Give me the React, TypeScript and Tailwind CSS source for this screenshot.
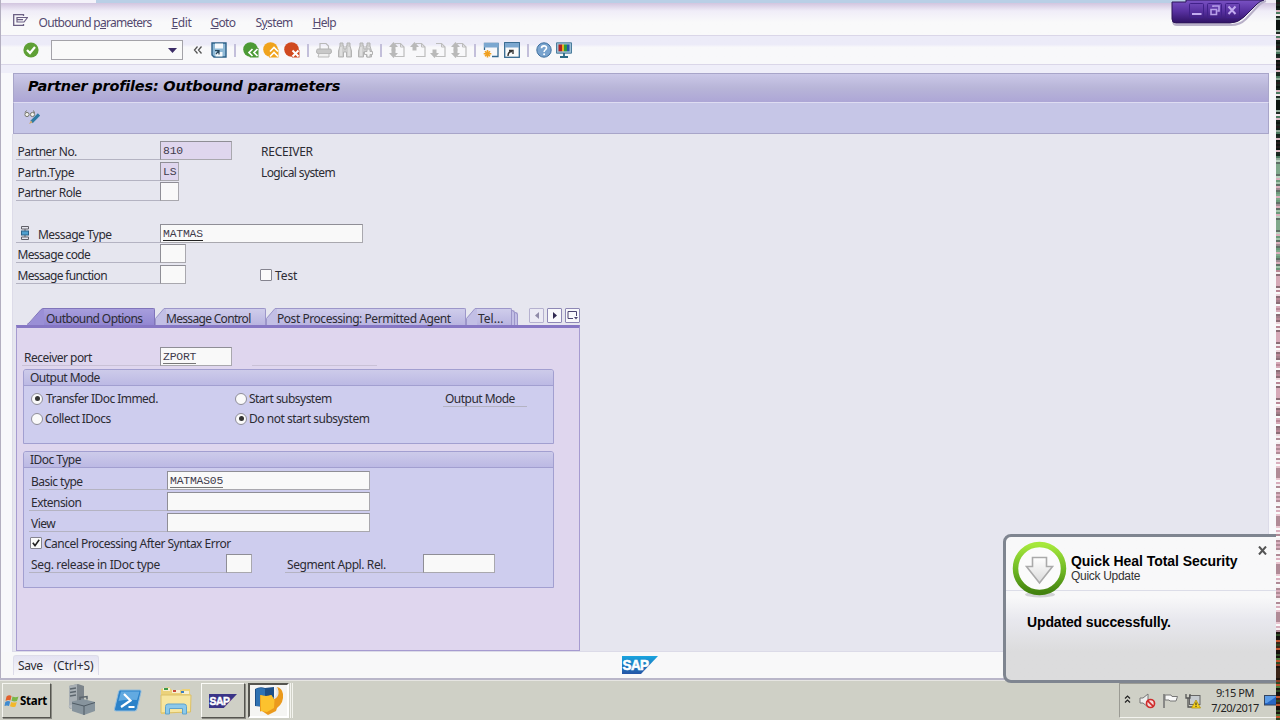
import type { ReactNode } from "react";
import clsx from "clsx";

/* ------------------------------------------------------------------ */
/*  Small building blocks                                              */
/* ------------------------------------------------------------------ */
function Label({ children, className }: { children: ReactNode; className?: string }) {
    return (
        <div className={clsx("h-[18px] shrink-0 whitespace-nowrap border-b border-[#b4b3c2] leading-[19px]", className)}>
            {children}
        </div>
    );
}

function Field({ value, className }: { value?: string; className?: string }) {
    return (
        <div
            className={clsx(
                "h-[19px] shrink-0 border border-[#a9a8ae] border-t-[#8f8e96] border-l-[#8f8e96] pl-[2px] pt-[3px] font-['Liberation_Mono'] text-[11.4px] leading-[13px] tracking-[-0.2px] text-[#3f3b4c]",
                className,
            )}
        >
            {value && <span className="block h-[13px] w-fit">{value}</span>}
        </div>
    );
}

function Row({ children }: { children?: ReactNode }) {
    return <div className="flex h-[20.65px] items-end">{children}</div>;
}

function Radio({ checked, children, className }: { checked?: boolean; children: ReactNode; className?: string }) {
    return (
        <div className={clsx("flex items-center whitespace-nowrap", className)}>
            <span className="mr-[3px] flex size-[12px] items-center justify-center rounded-full border border-[#8e8d98] bg-[#fafafa]">
                {checked && <span className="size-[5px] rounded-full bg-[#333]" />}
            </span>
            <span>{children}</span>
        </div>
    );
}

function Checkbox({ checked }: { checked?: boolean }) {
    return (
        <span className="flex size-[12px] items-center justify-center rounded-[1px] border border-[#85848f] bg-[#fafafa]">
            {checked && (
                <svg width="8" height="8" viewBox="0 0 8 8">
                    <path d="M0.8 3.8 3 6.6 7.2 0.8" fill="none" stroke="#222" strokeWidth="1.6" />
                </svg>
            )}
        </span>
    );
}

function Group({ title, children, className }: { title: string; children: ReactNode; className?: string }) {
    return (
        <div className={clsx("ml-[6px] w-[531px] rounded-t-[3px] border border-[#a29fd0] bg-[#cecdee]", className)}>
            <div className="h-[16px] rounded-t-[2px] border-b border-[#a29fd0] bg-linear-to-b from-[#cdcbea] to-[#bcb9e4] pl-[6px] leading-[15px]">
                {title}
            </div>
            {children}
        </div>
    );
}

/* ------------------------------------------------------------------ */
/*  Toolbar icons                                                      */
/* ------------------------------------------------------------------ */
function Icon({ children }: { children: ReactNode }) {
    return (
        <svg width="16" height="16" viewBox="0 0 16 16" fill="none" className="shrink-0">
            {children}
        </svg>
    );
}

const Sep = () => (
    <div className="flex w-[16px] shrink-0 justify-center">
        <div className="h-[13px] w-[2px] bg-[#c3bfda]" />
    </div>
);

function Printer() {
    return (
        <Icon>
            <path d="M4 7V1.5h6L12.5 4v3" stroke="#b9b9b9" strokeWidth="1.2" />
            <rect x="0.6" y="7" width="14.8" height="4.5" rx="1.5" fill="#c8c8c8" stroke="#b2b2b2" />
            <path d="M3 11.5h10V15H2z" fill="#f0f0f0" stroke="#b9b9b9" />
        </Icon>
    );
}

function Binoculars({ plus }: { plus?: boolean }) {
    return (
        <Icon>
            <path d="M3 1h3v3h1v3h2V4h1V1h3v3l1.5 5v6H9.5v-5h-3v5h-5V9L3 4z" fill="#cfcfcf" stroke="#b3b3b3" />
            <path d="M4 5v9M12 5v9" stroke="#efefef" />
            {plus && <path d="M10 7h3v2.5h2.5v3H13V15h-3v-2.5H7.5v-3H10z" fill="#f4f4f4" stroke="#b3b3b3" />}
        </Icon>
    );
}

function PageNav({ up, down }: { up?: boolean; down?: boolean }) {
    return (
        <Icon>
            <path d="M6 1.5h5.5L15 5v9.5H6" stroke="#bdbdbd" strokeWidth="1.2" />
            <path d="M11.5 1.5V5H15" stroke="#bdbdbd" />
            {up && <path d="M4.5 0 9 5H6.5v3.5h-4V5H0z" fill="#b9b9b9" />}
            {down && <path d="M4.5 16 9 11H6.5V7.5h-4V11H0z" fill="#b9b9b9" />}
        </Icon>
    );
}

function Toolbar() {
    return (
        <div className="flex h-[29px] shrink-0 items-center border-b border-[#dad6e8] bg-linear-to-b from-[#ecebf8] from-30% to-[#f8f8fa] to-40% pl-[22px]">
            <Icon>
                <circle cx="8" cy="8" r="7.6" fill="#5fa036" />
                <path d="M4 8l3 3 5-6" stroke="#fff" strokeWidth="2.2" />
            </Icon>
            <div className="ml-[12px] flex h-[20px] w-[132px] items-center justify-end border border-[#a3a2a8] bg-[#f9f9f9] pr-[5px]">
                <svg width="9" height="5" viewBox="0 0 9 5">
                    <path d="M0 0h9L4.5 5z" fill="#3b2c66" />
                </svg>
            </div>
            <div className="ml-[7px] flex items-center gap-[4.65px]">
                <Icon>
                    <path d="M7.5 4.5 4.5 8l3 3.5M11.5 4.5 8.5 8l3 3.5" stroke="#555" strokeWidth="1.3" />
                </Icon>
                <Icon>
                    <path d="M1 1h14v14H3l-2-2z" fill="#8fb9d6" stroke="#2c6088" strokeWidth="1.4" />
                    <path d="M4 1.5h8v5H4zM4.5 10h7v4.5h-7z" fill="#f5f9fc" />
                    <path d="M4 8.5h4v4M8 8.5 5 12" stroke="#28465c" strokeWidth="1.2" />
                </Icon>
            </div>
            <Sep />
            <div className="flex gap-[4.65px]">
                <Icon>
                    <circle cx="7.5" cy="7.5" r="7.3" fill="#4c9a35" />
                    <path d="M15.5 6v9.5H7L4.5 11 9 6z" fill="#4c9a35" />
                    <path d="M9.5 7 6 10.5 9.5 14M14.5 7 11 10.5l3.5 3.5" stroke="#fff" strokeWidth="1.7" />
                </Icon>
                <Icon>
                    <circle cx="7.5" cy="7.5" r="7.3" fill="#f0a31c" />
                    <path d="M7 5l8.5 2v8.5H6z" fill="#f0a31c" />
                    <path d="M7 9.5 11 5.5l4 4M7 14.5l4-4 4 4" stroke="#fff" strokeWidth="1.7" />
                </Icon>
                <Icon>
                    <circle cx="7.5" cy="7.5" r="7.3" fill="#d0491f" />
                    <path d="M8 8h7.5v7.5H8z" fill="#d0491f" />
                    <path d="M8.5 8.5l6 6M14.5 8.5l-6 6" stroke="#fff" strokeWidth="2" />
                </Icon>
            </div>
            <Sep />
            <div className="flex gap-[4.65px]">
                <Printer />
                <Binoculars />
                <Binoculars plus />
            </div>
            <Sep />
            <div className="flex gap-[4.65px]">
                <PageNav up down />
                <PageNav up />
                <PageNav down />
                <PageNav up down />
            </div>
            <Sep />
            <div className="flex gap-[4.65px]">
                <Icon>
                    <path d="M1.5 8V1.5h13.5v13H9" stroke="#33678f" strokeWidth="1.3" />
                    <path d="M1 1h14.5v4.5H1z" fill="#7ba7d0" />
                    <path d="M4.5 8v7.5M0.7 11.7h7.6M2 9.2l5 5M7 9.2l-5 5" stroke="#f0a020" strokeWidth="1.6" />
                </Icon>
                <Icon>
                    <rect x="0.7" y="0.7" width="14.6" height="14.6" fill="#fafafa" stroke="#33678f" strokeWidth="1.3" />
                    <path d="M1 1h14v4.5H1z" fill="#7ba7d0" />
                    <path d="M4 14c0-3 1-4.5 4-4.5M5 8.5h4V12" stroke="#333" strokeWidth="1.4" />
                </Icon>
            </div>
            <Sep />
            <div className="flex gap-[4.65px]">
                <Icon>
                    <circle cx="8" cy="8" r="7.2" fill="#79a3ce" stroke="#3d6f9f" />
                    <path d="M5.5 6.2C5.5 3 10.7 3.2 10.5 6c0 1.7-2.4 1.9-2.4 4" stroke="#fff" strokeWidth="1.6" />
                    <circle cx="8.1" cy="12.2" r="1" fill="#fff" />
                </Icon>
                <Icon>
                    <path d="M0.5 0.8h15v10.4H0.5z" fill="#9fc0d6" stroke="#4a7c9c" />
                    <path d="M2.5 2.5H6v6.8H2.5z" fill="#b32121" />
                    <path d="M6 2.5h2v6.8H6z" fill="#e8b021" />
                    <path d="M8 2.5h3v6.8H8z" fill="#2d9b3c" />
                    <path d="M11 2.5h2.5v6.8H11z" fill="#2457a8" />
                    <path d="M8 11v4M4 15h8" stroke="#2b6a86" strokeWidth="1.8" />
                </Icon>
            </div>
        </div>
    );
}

/* ------------------------------------------------------------------ */
/*  Tab strip                                                          */
/* ------------------------------------------------------------------ */
function Tab({ title, className }: { title: string; className: string }) {
    return (
        <div className={clsx("flex h-[17px]", className)}>
            <svg width="11" height="17" viewBox="0 0 11 17" className="shrink-0">
                <path d="M0 17V10.5L9 .5H11V17z" fill="#c2bfe5" />
                <path d="M0.5 17V10.5L9 .5H11" fill="none" stroke="#9c96c9" />
            </svg>
            <div className="flex-1 whitespace-nowrap rounded-tr-[2px] border-t border-r border-[#9c96c9] bg-linear-to-b from-[#cfcdeb] to-[#b9b5e0] leading-[19px]">
                {title}
            </div>
        </div>
    );
}

function TabStrip() {
    return (
        <div className="mt-[24px] ml-[3px] flex h-[17px] w-[564px]">
            <svg width="17" height="17" viewBox="0 0 17 17" className="ml-[11px] shrink-0">
                <path d="M0 17 2 15.5 14 1.5 16 .5H17V17z" fill="#9a8fd6" />
                <path d="M0 16.5 2 15 14 1.5 16 .5H17" fill="none" stroke="#8075ba" />
            </svg>
            <div className="w-[111px] whitespace-nowrap rounded-tr-[2px] border-t border-r border-[#8075ba] bg-linear-to-b from-[#a79edd] to-[#9287d1] pl-[2px] leading-[19px] tracking-[-0.58px]">
                Outbound Options
            </div>
            <Tab title="Message Control" className="w-[111px] tracking-[-0.68px]" />
            <Tab title="Post Processing: Permitted Agent" className="w-[200px] tracking-[-0.45px]" />
            <Tab title="Tel..." className="w-[46px] tracking-[0px] [&>div]:pl-px" />
            <div className="mt-[2px] w-[3px] rounded-tr border-t border-r border-[#9c96c9] bg-[#c2bfe5]" />
            <div className="mt-[4px] w-[3px] rounded-tr border-t border-r border-[#9c96c9] bg-[#c2bfe5]" />
            <div className="ml-auto flex gap-[3px]">
                <div className="flex size-[15px] items-center justify-center rounded-[1px] border border-[#b5b1cf] bg-[#ebeaf4]">
                    <svg width="4" height="7" viewBox="0 0 4 7"><path d="M4 0v7L0 3.5z" fill="#8f8aa8" /></svg>
                </div>
                <div className="flex size-[15px] items-center justify-center rounded-[1px] border border-[#8e88b5] bg-[#f8f8fb]">
                    <svg width="4" height="7" viewBox="0 0 4 7"><path d="M0 0v7l4-3.5z" fill="#2f2850" /></svg>
                </div>
                <div className="flex size-[15px] items-center justify-center rounded-[1px] border border-[#8e88b5] bg-[#f8f8fb]">
                    <svg width="11" height="10" viewBox="0 0 11 10" fill="none">
                        <path d="M6 8.5H1V1.500h8.500V6" stroke="#4a4370" />
                        <path d="M7 7h4L9 9.500z" fill="#4a4370" />
                    </svg>
                </div>
            </div>
        </div>
    );
}

/* ------------------------------------------------------------------ */
/*  Desktop parts                                                      */
/* ------------------------------------------------------------------ */
function SapLogo({ dark, width, height }: { dark?: boolean; width: number; height: number }) {
    return (
        <svg width={width} height={height} viewBox="0 0 36 18" preserveAspectRatio="none">
            <defs>
                <linearGradient id="sapBlue" x1="0" y1="0" x2="0" y2="1">
                    <stop offset="0" stopColor="#19a5df" />
                    <stop offset="1" stopColor="#2455a6" />
                </linearGradient>
            </defs>
            <path d="M0 0h36L19 18H0z" fill={dark ? "#3a3487" : "url(#sapBlue)"} />
            <text x="0.5" y="14" fontFamily="Liberation Sans" fontWeight="700" fontSize="14" textLength="26" lengthAdjust="spacingAndGlyphs" fill="#fff" stroke="#fff" strokeWidth="0.6">
                SAP
            </text>
        </svg>
    );
}

function WindowButtons() {
    return (
        <svg width="96" height="26" viewBox="0 0 96 26" fill="none" className="absolute top-0 left-[1171px]">
            <defs>
                <linearGradient id="capsule" x1="0" y1="0" x2="0" y2="1">
                    <stop offset="0" stopColor="#7a52c4" />
                    <stop offset="0.5" stopColor="#57309f" />
                    <stop offset="1" stopColor="#2f1263" />
                </linearGradient>
            </defs>
            <path d="M2 3v18q0 4 4 4h54q9 0 15-6L88 5q3-3 7-4" stroke="#b8b0c8" strokeWidth="2" />
            <path d="M1 2h14V0h78q-4 1-7 4L73 17q-6 6-14 6H5q-4 0-4-4z" fill="url(#capsule)" stroke="#2c1458" />
            <rect x="18.5" y="3.5" width="14" height="14" rx="1" stroke="#41218a" />
            <rect x="36.5" y="3.5" width="14" height="14" rx="1" stroke="#41218a" />
            <rect x="54.5" y="3.5" width="14" height="14" rx="1" stroke="#41218a" />
            <path d="M21 14h9.5" stroke="#c3acf0" strokeWidth="2" />
            <path d="M42 7V6h6v5h-1.5M40 9.5h5.5v5H40z" stroke="#b79fe8" strokeWidth="1.6" />
            <path d="M57.5 6.5l7 7.5M64.5 6.5l-7 7.5" stroke="#c3acf0" strokeWidth="2" />
        </svg>
    );
}

function Notification() {
    return (
        <div className="absolute top-[534px] left-[1003px] flex h-[149px] w-[290px] flex-col overflow-hidden rounded-[8px] border-[3px] border-[#7f8590] bg-linear-to-b from-[#f8f8f9] from-42% via-[#e8e8ee] via-58% to-[#dcdcdd] to-80%">
            <div className="flex h-[54px] shrink-0 border-b border-[#dcdde8]">
                <svg width="56" height="60" viewBox="0 0 56 60" className="relative ml-[6px] mt-[4px] shrink-0">
                    <defs>
                        <linearGradient id="ring" x1="0" y1="0" x2="0" y2="1">
                            <stop offset="0" stopColor="#a6e83c" />
                            <stop offset="0.5" stopColor="#72bb25" />
                            <stop offset="1" stopColor="#43820f" />
                        </linearGradient>
                        <linearGradient id="arrow" x1="0" y1="0" x2="0" y2="1">
                            <stop offset="0" stopColor="#fff" />
                            <stop offset="1" stopColor="#dadada" />
                        </linearGradient>
                    </defs>
                    <ellipse cx="28" cy="53.5" rx="15" ry="3" fill="#d2d2d6" />
                    <circle cx="27.5" cy="27.5" r="24" fill="#fbfbfb" stroke="url(#ring)" strokeWidth="5.5" />
                    <path d="M20.5 16.5h14v9h6L27.5 42 14.5 25.5h6z" fill="url(#arrow)" stroke="#aaa" strokeWidth="1.6" />
                </svg>
                <div className="ml-[3px] mt-[16px] font-['Liberation_Sans'] whitespace-nowrap text-black">
                    <div className="text-[14px] leading-[17px] font-bold tracking-[-0.05px]">Quick Heal Total Security</div>
                    <div className="text-[12px] leading-[13px] tracking-[-0.3px] text-[#333]">Quick Update</div>
                </div>
                <svg width="9" height="9" viewBox="0 0 9 9" className="ml-[20px] mt-[9px] shrink-0">
                    <path d="M1 .5l7 8M8 .5l-7 8" stroke="#555" strokeWidth="2" />
                </svg>
            </div>
            <div className="mt-[22px] ml-[21px] font-['Liberation_Sans'] text-[14px] leading-[18px] font-bold tracking-[-0.14px] text-black">
                Updated successfully.
            </div>
        </div>
    );
}

function Taskbar() {
    return (
        <div className="flex h-[39px] shrink-0 bg-[#cfd0c6] pt-px">
            <div className="ml-[2px] mt-[1px] flex h-[35px] w-[49px] items-center border border-[#f5f5f0] border-r-[#55554f] border-b-[#55554f] pl-px shadow-[1px_1px_0_#8b8b84]">
                <svg width="15" height="14" viewBox="-1 0 15 14" className="shrink-0">
                    <path d="M1.5 2.5Q4 .5 6.5 2L5.5 6.5Q3 5.5.5 7z" fill="#e2602c" />
                    <path d="M7.5 2.5q3 1.5 6 0L12 7Q9.5 8 6.5 6.8z" fill="#7ab648" />
                    <path d="M.3 8Q2.5 6.5 5.2 7.5L4 12Q2 10.8-.5 12z" fill="#3f8bd0" />
                    <path d="M6.2 8q3 1.2 5.6 0l-1.3 4.5q-2.8 1.2-5.5-.2z" fill="#f3b829" />
                </svg>
                <span className="ml-px text-[11.5px] font-bold tracking-[-0.25px] text-black">Start</span>
            </div>
            {/* server manager */}
            <svg width="28" height="32" viewBox="0 0 28 32" className="ml-[17px] mt-[2px] shrink-0">
                <path d="M1 2 10 0l6 2v22l-9 2-6-2z" fill="#7d858b" />
                <path d="M1 2l8-2v22l-8 2z" fill="#a8afb4" />
                <path d="M2 5l6-1M2 8.5l6-1M2 12l6-1" stroke="#5d666d" strokeWidth="1.3" />
                <path d="M0 22l9-3 6 4-9 4z" fill="#b9bec2" />
                <path d="M4 17.5 15 15l12 3v9l-11 4-12-4z" fill="#87949d" />
                <path d="M4 19l12 3 11-3.5M16 22v9" stroke="#4f5b64" fill="none" />
                <path d="M12 16v-2.5l7-1v3" fill="none" stroke="#5d666d" strokeWidth="1.5" />
            </svg>
            {/* powershell */}
            <svg width="28" height="24" viewBox="0 0 28 24" className="ml-[18px] mt-[7px] shrink-0">
                <path d="M6 1h20q1.5 0 1 2l-4 17q-.5 2-2.5 2H2q-2 0-1.5-2l4-17Q5 1 6 1z" fill="#2b82c9" stroke="#93bddd" />
                <path d="M7 2.5h18.5L23 11Q13 10 4.5 12z" fill="#62aae1" />
                <path d="M10 5l6.5 6.5L7 18M14.5 18h6" fill="none" stroke="#fff" strokeWidth="2.2" />
            </svg>
            {/* explorer */}
            <svg width="32" height="30" viewBox="0 0 32 30" className="ml-[18px] mt-[4px] shrink-0">
                <path d="M1 7V3l8-2 3 3h9l2-1h7v5l1 18-30 2z" fill="#ecd27a" />
                <path d="M3 2h7v3H3zM12 4h8v3h-8zM22 5h7v3h-7z" fill="#f7efd0" />
                <path d="M4 2h4v2H4z" fill="#3f9a4a" />
                <path d="M13 4h3v2h-3z" fill="#c84a3b" />
                <path d="M21 5h3v2h-3z" fill="#3d7fc2" />
                <path d="M1 9h30l-.5 17L1 27z" fill="#f7e6a0" stroke="#dcc067" />
                <path d="M5.5 28V20.5q0-2.5 2.5-2.5h16q2.5 0 2.5 2.5V28h-4v-5.5h-13V28z" fill="#8cc9ea" stroke="#5fa3cc" />
            </svg>
            <div className="ml-[9px] mt-[1px] flex h-[35px] w-[44px] items-center justify-center border border-[#fbfbf7] border-r-[#55554f] border-b-[#55554f] shadow-[1px_1px_0_#8b8b84]">
                <SapLogo dark width={28} height={14} />
            </div>
            <div className="ml-[3px] mt-[1px] flex h-[35px] w-[41px] items-center justify-center border-2 border-[#fff] border-t-[#55554f] border-l-[#55554f] bg-[#f5f5f3]">
                <svg width="32" height="30" viewBox="0 0 32 30">
                    <path d="M2 3q5-3 10-1l9-1v18l-10 2-9-1z" fill="#1d4f87" />
                    <path d="M3 3q5-2 9 0v17H3z" fill="#2f72b2" />
                    <path d="M24 1q5 1 6 7 1 9-6 14l-1 3-8 4-6-4-2 .5V9q6 2 11 0l2 4q5-2 5-6Q25.500 3.500 24 1z" fill="#eb9a1c" />
                    <path d="M7.500 9q6 2 11 0l3 5-.5 8-7 4-6-1z" fill="#fcc22e" />
                    <path d="M23 1.500q4 7-2 11" fill="none" stroke="#dfe4ea" strokeWidth="2" />
                </svg>
            </div>
            <div className="ml-px mt-[1px] h-[35px] w-[3px] border-x border-[#f3f3ee]" />

            {/* notification area */}
            <div className="ml-auto mt-px flex h-[35px] w-[161px] items-center border-t border-b border-l border-[#9b9b94] border-b-[#f3f3ee] pl-[4px]">
                <svg width="7" height="8" viewBox="0 0 7 8" className="mb-[3px]">
                    <path d="M1 3.5 3.5 1 6 3.5M1 7.5 3.5 5 6 7.5" fill="none" stroke="#222" strokeWidth="1.2" />
                </svg>
                <svg width="17" height="16" viewBox="0 0 17 16" className="ml-[8px]">
                    <path d="M1 5h3l5-4v13l-5-4H1z" fill="#eee" stroke="#777" />
                    <circle cx="11.5" cy="10.5" r="4" fill="#f4dada" stroke="#cf2c2c" strokeWidth="1.7" />
                    <path d="M8.8 7.8l5.5 5.5" stroke="#cf2c2c" strokeWidth="1.7" />
                </svg>
                <svg width="17" height="16" viewBox="0 0 17 16" className="ml-[6px]">
                    <path d="M2 1v14" stroke="#777" strokeWidth="1.6" />
                    <path d="M3 2h6l1 1.5h5.5L14 8H8L7 7H3z" fill="#f8f8f8" stroke="#777" />
                </svg>
                <svg width="16" height="16" viewBox="0 0 16 16" className="ml-[6px]">
                    <rect x="4.5" y="2.5" width="10.5" height="9" fill="#c6cbd0" stroke="#666" />
                    <path d="M1 1v4h4V1M3 5v9h4" fill="none" stroke="#555" strokeWidth="1.3" />
                    <path d="M11 7l4.5 8h-9z" fill="#f7d11e" stroke="#a98b00" strokeWidth="0.7" />
                    <path d="M11 9.5v2.8M11 13v1" stroke="#222" />
                </svg>
                <div className="mb-[2px] ml-[10px] w-[48px] text-center text-[11px] leading-[15px] tracking-[-0.5px] whitespace-nowrap text-[#222]">
                    <div>9:15 PM</div>
                    <div>7/20/2017</div>
                </div>
                <svg width="14" height="12" viewBox="0 0 14 12" className="ml-[5px]">
                    <rect x="0.5" y="0.5" width="13" height="9.5" fill="#2766c4" stroke="#35455f" />
                    <path d="M1 1h12L3 8H1z" fill="#5b9be6" />
                </svg>
            </div>
        </div>
    );
}

/* garbled scanlines along the right edge of the capture */
const STRIP_TOP = ["#12211a", "#3d6a52", "#0d1411", "#8fa898", "#1b2a22", "#f3e6ea", "#4b7a60", "#241a1c", "#d9b7c2", "#5f8a72"];
const STRIP_GREEN = ["#7fa88b", "#5f6f66", "#b9d2bf", "#d9aebb", "#6b9a7b", "#9e8c93", "#a3c4ab"];
const STRIP_PINK = ["#d6a9b8", "#8b6c76", "#f5eef0", "#b98796", "#fafafa", "#a4808c", "#ecd2da"];
const STRIP_PALE = ["#fafafa", "#d9aebd", "#f6eff2", "#fafafa", "#b08a96", "#e9c5d0"];
const STRIP_END = ["#3b2418", "#1b120d", "#8a3a22", "#2f4a24", "#c0552f", "#14100d", "#4f7a3d"];

function stripColor(i: number) {
    const y = i * 2;
    const set = y < 160 ? STRIP_TOP : y < 270 ? STRIP_GREEN : y < 435 ? STRIP_PINK : y < 632 ? STRIP_PALE : STRIP_END;
    return set[(i * 7 + ((i * i) >> 3)) % set.length];
}

function EdgeStrip() {
    return (
        <div className="absolute top-0 right-0 w-[4px]">
            {Array.from({ length: 360 }, (_, i) => (
                <div key={i} className="h-[2px]" style={{ background: stripColor(i) }} />
            ))}
        </div>
    );
}

/* ------------------------------------------------------------------ */
/*  Screen                                                             */
/* ------------------------------------------------------------------ */
export default function App() {
    return (
        <div className="relative flex h-[720px] w-[1280px] flex-col overflow-hidden bg-[#f8f8fa] font-['Noto_Sans',sans-serif] text-[12px] tracking-[-0.53px] text-[#2c2b33]">
            <div className="flex h-[678px] shrink-0 flex-col border-l border-[#b3afc0]">
                <div className="flex h-[3px] shrink-0">
                    <div className="w-[95px] bg-[#f4f2fa]" />
                    <div className="flex-1 bg-[#b9cfe6]" />
                    <div className="w-[16px] bg-[#f0edf6]" />
                </div>

                {/* ========== MENU BAR ========== */}
                <div className="flex h-[33px] shrink-0 items-center border-b border-[#dad6e8] bg-linear-to-b from-[#d2c5df] via-[#f0edf8] via-25% to-[#f9f9fa] to-60% pl-[12px] pt-[7px] tracking-[-0.7px] whitespace-nowrap text-[#54496f]">
                    <svg width="15" height="12" viewBox="0 0 15 12" fill="none" className="mb-[6px]">
                        <path d="M10.5 2V.7H.7v10.6h9.8V10" stroke="#6b5f84" strokeWidth="1.3" />
                        <path d="M4 3.5h10.5L11 8H4zM4 5.7h6" stroke="#6b5f84" strokeWidth="1.2" />
                    </svg>
                    <span className="ml-[10.5px] w-[133px]">Outbound p<u>a</u>rameters</span>
                    <span className="w-[39px] tracking-[-0.4px]"><u>E</u>dit</span>
                    <span className="w-[45px]"><u>G</u>oto</span>
                    <span className="w-[57px] tracking-[-0.6px]">S<u>y</u>stem</span>
                    <span><u>H</u>elp</span>
                </div>

                <Toolbar />

                {/* ========== WORK AREA ========== */}
                <div className="h-[8px] shrink-0 bg-[#efeef9]" />
                <div className="flex flex-1 flex-col bg-[#f8f8fb] pr-[11px] pl-[11px]">
                    <div className="ml-px flex h-[30px] shrink-0 items-center border border-[#a8a5c9] border-b-[#dedcf2] bg-linear-to-b from-[#cbc8e8] via-[#b8b5d8] via-50% to-[#ada6d6] pb-[3px] pl-[14px] font-['DejaVu_Sans'] text-[14.5px] font-bold text-black italic">
                        <span className="tracking-[-0.2px] whitespace-nowrap">Partner profiles: Outbound parameters</span>
                    </div>
                    <div className="ml-px h-[31px] shrink-0 border-x border-b border-[#a8a5c9] bg-[#c6c6e7] pt-[6px] pl-[10px]">
                        <svg width="16" height="16" viewBox="0 0 16 16" fill="none">
                            <circle cx="3" cy="5.5" r="2.1" fill="#f2f2ee" stroke="#77776c" />
                            <circle cx="8.5" cy="5.5" r="2.1" fill="#f2f2ee" stroke="#77776c" />
                            <path d="M1 3.5 2.5 1.5M10.5 4 9.5 1.5" stroke="#77776c" />
                            <path d="M15 5.5 7.5 13" stroke="#2f7ba3" strokeWidth="3.2" />
                            <path d="M7 11.5 5 15l3.5-1.5z" fill="#cfa56a" />
                        </svg>
                    </div>

                    <div className="flex-1 border-x border-b border-[#dcdbe8] bg-[#e6e6ef] pt-[5.3px]">
                        <Row>
                            <Label className="ml-[3px] w-[144px] pl-[1.5px]">Partner No.</Label>
                            <Field value="810" className="w-[72px] bg-[#dfd6ee]" />
                            <span className="ml-[29px] leading-[17px] tracking-[-0.25px]">RECEIVER</span>
                        </Row>
                        <Row>
                            <Label className="ml-[3px] w-[144px] pl-[1.5px] tracking-[-0.3px]">Partn.Type</Label>
                            <Field value="LS" className="w-[19px] bg-[#dfd6ee]" />
                            <span className="ml-[82px] leading-[17px] tracking-[-0.62px]">Logical system</span>
                        </Row>
                        <Row>
                            <Label className="ml-[3px] w-[144px] pl-[1.5px]">Partner Role</Label>
                            <Field className="w-[19px] bg-[#f9f9f9]" />
                        </Row>
                        <Row />
                        <Row>
                            <Label className="ml-[3px] flex w-[144px] pl-[5px]">
                                <svg width="8" height="14" viewBox="0 0 8 14" fill="none" className="mt-px mr-[9px]">
                                    <path d="M.5 .5h7v2.5h-7zM.5 11h7v2.5h-7zM4 3v8" stroke="#606068" />
                                    <rect x="0.5" y="5" width="7" height="4" fill="#4fa0cf" stroke="#2d6288" />
                                </svg>
                                Message Type
                            </Label>
                            <Field value="MATMAS" className="w-[203px] bg-[#f9f9f9] [&>span]:border-b [&>span]:border-[#222]" />
                        </Row>
                        <Row>
                            <Label className="ml-[3px] w-[144px] pl-[1.5px] tracking-[-0.64px]">Message code</Label>
                            <Field className="w-[26px] bg-[#f9f9f9]" />
                        </Row>
                        <Row>
                            <Label className="ml-[3px] w-[144px] pl-[1.5px] tracking-[-0.66px]">Message function</Label>
                            <Field className="w-[26px] bg-[#f9f9f9]" />
                            <div className="ml-[74px] flex h-[18px] items-center gap-[3px] leading-[17px] tracking-[-0.1px]">
                                <Checkbox />
                                <span className="pt-px">Test</span>
                            </div>
                        </Row>

                        <TabStrip />
                        <div className="ml-[3px] h-[326px] w-[564px] border border-t-[3px] border-[#a69bd0] border-t-[#8677c4] bg-[#dfd6ee]">
                            <div className="flex h-[38px] items-end">
                                <Label className="ml-[5px] w-[138px] border-[#c9c1d6] pl-[2px]">Receiver port</Label>
                                <Field value="ZPORT" className="w-[72px] bg-[#f9f9f9] [&>span]:border-b [&>span]:border-[#777]" />
                                <div className="ml-[20px] w-[125px] border-b border-[#c9c1d6]" />
                            </div>

                            <Group title="Output Mode" className="mt-[3px] h-[75px]">
                                <div className="grid h-[42px] grid-cols-[204px_204px_82px] pt-[3px] pl-[7px] leading-[20px]">
                                    <Radio checked>Transfer IDoc Immed.</Radio>
                                    <Radio className="[&>span:first-child]:mr-[2px]">Start subsystem</Radio>
                                    <Label className="ml-[4px] w-[84px] pl-[2px] leading-[20px]">Output Mode</Label>
                                    <Radio className="[&>span:first-child]:mr-[2px]">Collect IDocs</Radio>
                                    <Radio checked className="tracking-[-0.48px] [&>span:first-child]:mr-[2px]">Do not start subsystem</Radio>
                                </div>
                            </Group>

                            <Group title="IDoc Type" className="mt-[7px] h-[137px]">
                                <div className="pt-[2px]">
                                    <Row>
                                        <Label className="ml-[5px] w-[138px] pl-[2px]">Basic type</Label>
                                        <Field value="MATMAS05" className="w-[203px] bg-[#f9f9f9] [&>span]:border-b [&>span]:border-[#777]" />
                                    </Row>
                                    <Row>
                                        <Label className="ml-[5px] w-[138px] pl-[2px]">Extension</Label>
                                        <Field className="w-[203px] bg-[#f9f9f9]" />
                                    </Row>
                                    <Row>
                                        <Label className="ml-[5px] w-[138px] pl-[2px]">View</Label>
                                        <Field className="w-[203px] bg-[#f9f9f9]" />
                                    </Row>
                                    <Row>
                                        <div className="ml-[6px] flex items-center gap-[2px] leading-[17px] tracking-[-0.51px]">
                                            <Checkbox checked />
                                            <span className="pt-px">Cancel Processing After Syntax Error</span>
                                        </div>
                                    </Row>
                                    <Row>
                                        <Label className="ml-[5px] w-[197px] pl-[2px] tracking-[-0.36px]">Seg. release in IDoc type</Label>
                                        <Field className="w-[26px] bg-[#f9f9f9]" />
                                        <Label className="ml-[33px] w-[138px] pl-[2px] tracking-[-0.4px]">Segment Appl. Rel.</Label>
                                        <Field className="w-[72px] bg-[#f9f9f9]" />
                                    </Row>
                                </div>
                            </Group>
                        </div>
                    </div>
                </div>

                {/* ========== STATUS BAR ========== */}
                <div className="flex h-[26px] shrink-0 items-center bg-[#f8f8f9]">
                    <div className="ml-[12px] flex h-[20px] w-[86px] gap-[11px] rounded-t-[3px] border-t border-x border-[#dddce9] bg-linear-to-b from-[#e4e3f2] to-[#f8f8f9] pl-[4px] leading-[19px] tracking-[-0.1px]">
                        <span className="tracking-[-0.4px]">Save</span>
                        <span>(Ctrl+S)</span>
                    </div>
                    <div className="ml-[523px]">
                        <SapLogo width={36} height={18} />
                    </div>
                </div>
            </div>
            <div className="h-[3px] shrink-0 border-t-2 border-[#b9b6c9] bg-[#e6e5e2]" />

            <Taskbar />
            <WindowButtons />
            <Notification />
            <EdgeStrip />
        </div>
    );
}
